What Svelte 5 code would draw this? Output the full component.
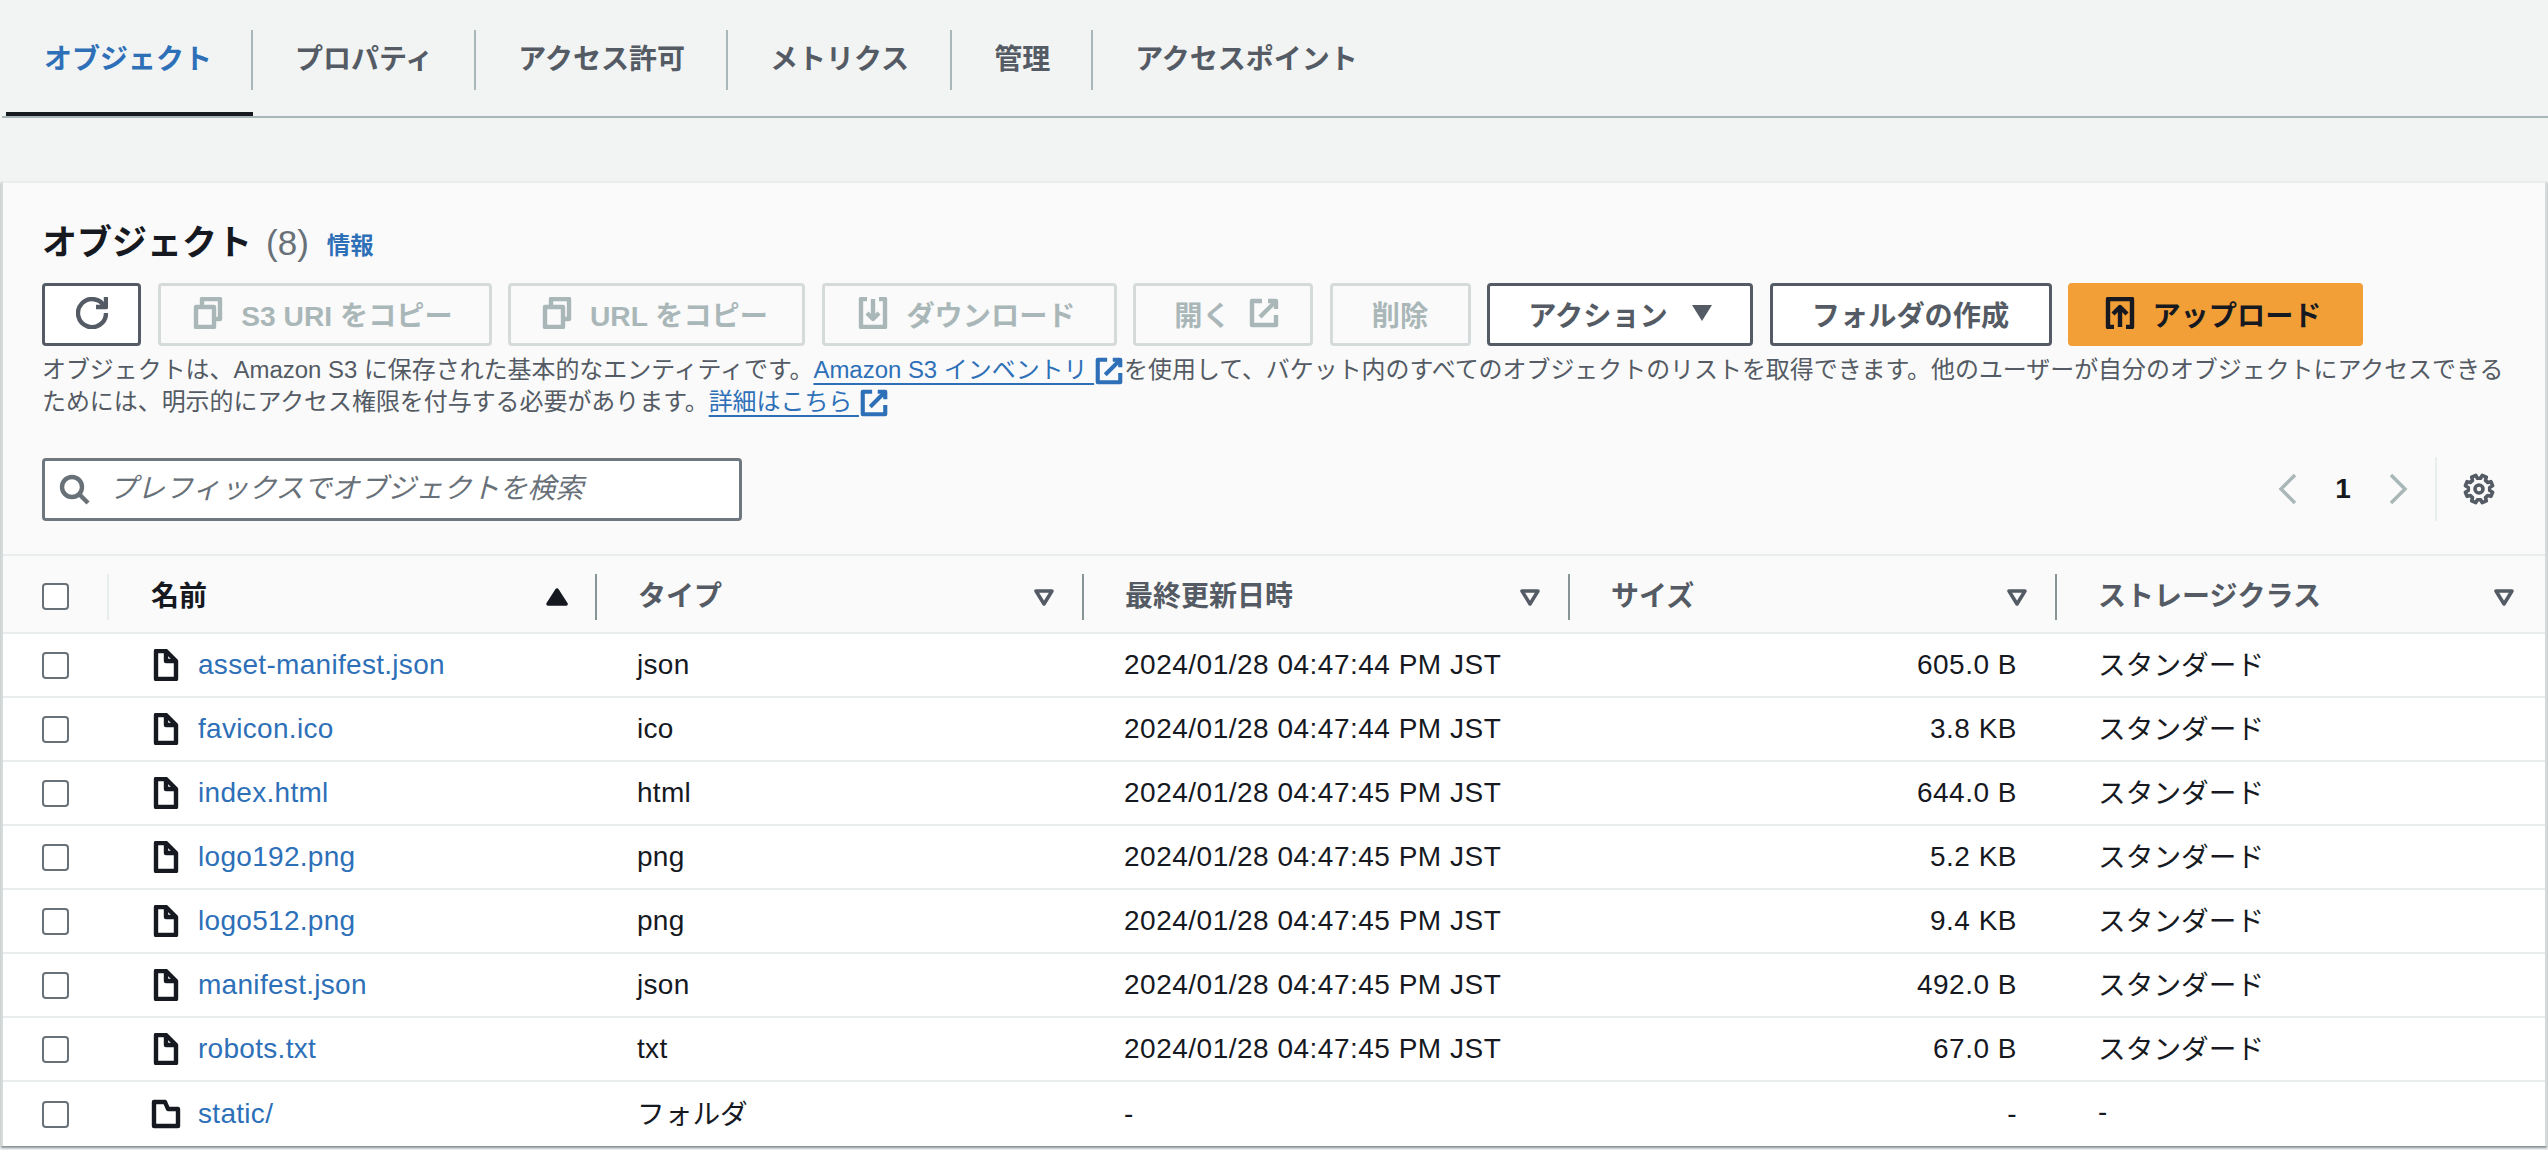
<script>
  const tabs = ["オブジェクト", "プロパティ", "アクセス許可", "メトリクス", "管理", "アクセスポイント"];

  const files = [
    { name: "asset-manifest.json", type: "json", date: "2024/01/28 04:47:44 PM JST", size: "605.0 B", cls: "スタンダード" },
    { name: "favicon.ico", type: "ico", date: "2024/01/28 04:47:44 PM JST", size: "3.8 KB", cls: "スタンダード" },
    { name: "index.html", type: "html", date: "2024/01/28 04:47:45 PM JST", size: "644.0 B", cls: "スタンダード" },
    { name: "logo192.png", type: "png", date: "2024/01/28 04:47:45 PM JST", size: "5.2 KB", cls: "スタンダード" },
    { name: "logo512.png", type: "png", date: "2024/01/28 04:47:45 PM JST", size: "9.4 KB", cls: "スタンダード" },
    { name: "manifest.json", type: "json", date: "2024/01/28 04:47:45 PM JST", size: "492.0 B", cls: "スタンダード" },
    { name: "robots.txt", type: "txt", date: "2024/01/28 04:47:45 PM JST", size: "67.0 B", cls: "スタンダード" },
    { name: "static/", type: "フォルダ", date: "-", size: "-", cls: "-", folder: true }
  ];

  const columns = ["タイプ", "最終更新日時", "サイズ", "ストレージクラス"];

  // 8 toothed gear outline in a 16 box
  function gearPath() {
    const pts = [];
    for (let i = 0; i < 8; i++) {
      const a = (Math.PI / 4) * i + Math.PI / 8;
      const w = 0.2;
      pts.push([a - w * 1.25, 5.4], [a - w * 0.8, 7], [a + w * 0.8, 7], [a + w * 1.25, 5.4]);
    }
    return (
      pts
        .map(([a, r], i) => `${i ? "L" : "M"}${(8 + r * Math.cos(a)).toFixed(2)} ${(8 + r * Math.sin(a)).toFixed(2)}`)
        .join("") + "Z"
    );
  }
</script>

{#snippet external()}
  <svg class="ext" viewBox="0 0 16 16"><path d="M10 2h4v4" /><path d="m6 10 8-8" /><path d="M14 9.05V14H2V2h5" /></svg>
{/snippet}

{#snippet copy()}
  <svg class="ico" viewBox="0 0 16 16"><path d="M2 5h9v10H2z" /><path d="M5 5V1h9v10h-3" /></svg>
{/snippet}

<div class="page">
  <nav class="tabs">
    {#each tabs as tab, i}
      <div class="tab" class:active={i === 0}>
        <span class:last={i === tabs.length - 1}>{tab}</span>
      </div>
    {/each}
  </nav>

  <section class="panel">
    <div class="toolbar">
      <div class="title">
        <h2>オブジェクト</h2>
        <span class="count">(8)</span>
        <a class="info" href="#info">情報</a>
      </div>

      <div class="actions">
        <button class="btn refresh" aria-label="更新">
          <svg class="ico" viewBox="0 0 16 16"><path d="M10 5h5V0" /><path d="M15 8a7 7 0 1 1-.7-3" /></svg>
        </button>
        <button class="btn off w-s3">{@render copy()}S3 URI をコピー</button>
        <button class="btn off w-url">{@render copy()}URL をコピー</button>
        <button class="btn off w-dl">
          <svg class="ico" viewBox="0 0 16 16"><path d="M5 1H2v14h12V1h-3" /><path d="M8 1v10" /><path d="m5 8 3 3 3-3" /></svg>
          ダウンロード
        </button>
        <button class="btn off w-open">開く{@render external()}</button>
        <button class="btn off w-del">削除</button>
        <button class="btn w-act">
          アクション
          <svg class="caret" viewBox="0 0 20 16"><path d="M0 0h20L10 16z" /></svg>
        </button>
        <button class="btn w-folder">フォルダの作成</button>
        <button class="btn primary w-up">
          <svg class="ico" viewBox="0 0 16 16"><path d="M5 15H2V1h12v14h-3" /><path d="M8 15V5" /><path d="m4.500 8.500 3.500-3.500 3.500 3.500" /></svg>
          アップロード
        </button>
      </div>

      <p class="desc">
        オブジェクトは、Amazon S3 に保存された基本的なエンティティです。<a href="#inv">Amazon S3 インベントリ&nbsp;</a>{@render external()}を使用して、バケット内のすべてのオブジェクトのリストを取得できます。他のユーザーが自分のオブジェクトにアクセスできるためには、明示的にアクセス権限を付与する必要があります。<a href="#more">詳細はこちら&nbsp;</a>{@render external()}
      </p>

      <div class="filter">
        <label class="search">
          <svg class="ico" viewBox="0 0 16 16"><circle cx="7" cy="7" r="5" /><path d="m15 15-4.5-4.5" /></svg>
          <input type="text" placeholder="プレフィックスでオブジェクトを検索" />
        </label>
        <div class="pager">
          <svg class="chev" viewBox="0 0 32 32"><path d="M23 2 9 16l14 14" /></svg>
          <span class="num">1</span>
          <svg class="chev" viewBox="0 0 32 32"><path d="m9 2 14 14L9 30" /></svg>
          <i class="vsep"></i>
          <svg class="ico gear" viewBox="0 0 16 16"><path d={gearPath()} /><circle cx="8" cy="8" r="2" /></svg>
        </div>
      </div>
    </div>

    <div class="table">
      <div class="row head">
        <div class="hcell first"><span class="box"></span></div>
        <div class="hcell sorted">
          <span>名前</span>
          <svg class="sort" viewBox="0 0 22 18"><path d="M11 2 20 16H2z" fill="currentColor" /></svg>
        </div>
        {#each columns as col}
          <div class="hcell">
            <span>{col}</span>
            <svg class="sort" viewBox="0 0 22 18"><path d="M3 3h16l-8 13z" /></svg>
          </div>
        {/each}
      </div>

      {#each files as f}
        <div class="row">
          <div class="cell"><span class="box"></span></div>
          <div class="cell name">
            {#if f.folder}
              <svg class="ico" viewBox="0 0 16 16"><path d="M2 2v12h12V5.500H9L7.500 2z" /></svg>
            {:else}
              <svg class="ico" viewBox="0 0 16 16"><path d="M3 1h5l5 5v9H3z" /><path d="M8 1v5h5" /></svg>
            {/if}
            <a href="#file">{f.name}</a>
          </div>
          <div class="cell" class:kana={f.folder}>{f.type}</div>
          <div class="cell date">{f.date}</div>
          <div class="cell size">{f.size}</div>
          <div class="cell kana">{f.cls}</div>
        </div>
      {/each}
    </div>
  </section>
</div>

<style>
  :global(body) {
    margin: 0;
    background: #f2f3f3;
  }
  .page {
    width: 2548px;
    height: 1150px;
    overflow: hidden;
    background: #f2f3f3;
    font-family: "Liberation Sans", "Noto Sans CJK JP", sans-serif;
    color: #16191f;
  }

  .tabs {
    display: flex;
    height: 116px;
    margin-left: 2px;
    padding-left: 4px;
    border-bottom: 2px solid #aab7b8;
  }
  .tab {
    height: 116px;
    padding-top: 30px;
    box-sizing: border-box;
    font-size: 28px;
    font-weight: 700;
    color: #545b64;
  }
  .tab span {
    display: flex;
    align-items: center;
    height: 60px;
    padding: 0 41px 6px 42px;
    box-sizing: border-box;
    border-right: 2px solid #aab7b8;
  }
  .tab:first-child span {
    padding-left: 38px;
    padding-right: 39px;
  }
  .tab span.last {
    border-right: none;
  }
  .tab.active {
    color: #2e70b8;
    border-bottom: 4px solid #16191f;
  }

  .panel {
    margin: 63px 1px 0;
    background: #fafafa;
    border: 2px solid #d5dbdb;
    border-top-color: #eaeded;
    border-bottom: none;
    box-shadow: 0 2px 2px rgba(0, 28, 36, 0.45);
  }
  .toolbar {
    padding: 40px 50px 33px 39px;
  }

  .title {
    display: flex;
    align-items: center;
    height: 40px;
    line-height: 40px;
    padding-bottom: 2px;
    margin-bottom: -2px;
  }
  .title h2 {
    margin: 0;
    font-size: 35px;
    font-weight: 700;
  }
  .count {
    margin-left: 14px;
    font-size: 35px;
    color: #687078;
  }
  .info {
    margin-left: 18px;
    margin-top: 6px;
    font-size: 23.4px;
    font-weight: 700;
    color: #2e70b8;
    text-decoration: none;
  }

  .actions {
    display: flex;
    gap: 16.500px;
    margin-top: 20px;
  }
  .btn {
    display: flex;
    align-items: center;
    justify-content: center;
    gap: 17px;
    height: 63px;
    padding: 0 0 3px;
    box-sizing: border-box;
    background: #fff;
    border: 3px solid #545b64;
    border-radius: 4px;
    font: inherit;
    font-size: 28.2px;
    font-weight: 700;
    color: #545b64;
  }
  .btn.off {
    background: #fafafa;
    border-color: #d5dbdb;
    color: #aab7b8;
  }
  .btn.primary {
    background: #f29f38;
    border-color: #f29f38;
    color: #16191f;
  }
  .refresh { width: 99px; }
  .w-s3 { width: 334px; padding-right: 4px; }
  .w-url { width: 297px; padding-right: 4px; }
  .w-dl { width: 295px; padding-right: 5px; }
  .w-open { width: 180px; padding-left: 8px; gap: 17px; }
  .w-del { width: 141px; }
  .w-act { width: 266px; gap: 24px; }
  .w-folder { width: 282px; }
  .w-up { width: 295px; padding-right: 5px; gap: 16px; }

  .ico,
  .ext {
    flex: none;
    width: 32px;
    height: 32px;
    fill: none;
    stroke: currentColor;
    stroke-width: 2.2;
    stroke-linejoin: round;
  }
  .caret {
    width: 20px;
    height: 16px;
    fill: currentColor;
  }

  .desc {
    width: 2470px;
    margin: 8px 0 0;
    font-size: 23.95px;
    line-height: 32px;
    color: #545b64;
  }
  .desc a {
    color: #2e70b8;
    text-decoration: underline;
    text-decoration-thickness: 2px;
    text-underline-offset: 5px;
  }
  .desc .ext {
    width: 30px;
    height: 30px;
    margin: -4px 0 -4px 0;
    vertical-align: -4px;
    color: #2e70b8;
  }

  .filter {
    display: flex;
    align-items: center;
    justify-content: space-between;
    margin-top: 39px;
  }
  .search {
    display: flex;
    align-items: center;
    gap: 19px;
    width: 700px;
    height: 63px;
    padding-left: 13px;
    box-sizing: border-box;
    background: #fff;
    border: 3px solid #70787f;
    border-radius: 4px;
    color: #687078;
  }
  .search input {
    flex: 1;
    min-width: 0;
    padding: 0;
    border: none;
    outline: none;
    background: transparent;
    font: inherit;
    font-size: 28px;
    font-style: italic;
  }
  .search input::placeholder {
    color: #687078;
    opacity: 1;
  }

  .pager {
    display: flex;
    align-items: center;
    height: 64px;
  }
  .chev {
    width: 32px;
    height: 32px;
    fill: none;
    stroke: #aab7b8;
    stroke-width: 3.500;
  }
  .num {
    width: 16px;
    margin: 0 31px;
    font-size: 28px;
    font-weight: 700;
    text-align: center;
  }
  .vsep {
    width: 2px;
    height: 64px;
    margin: 0 26px 0 21px;
    background: #eaeded;
  }
  .gear {
    color: #545b64;
    stroke-width: 1.8;
  }

  .table {
    font-size: 28px;
    letter-spacing: 0.3px;
  }
  .row {
    display: grid;
    grid-template-columns: 106px 488px 487px 486px 487px 1fr;
    height: 64px;
    box-sizing: border-box;
    background: #fff;
    border-bottom: 2px solid #eaeded;
  }
  .row:last-child {
    border-bottom: none;
  }
  .row.head {
    height: 80px;
    padding: 18px 0 19px;
    background: #fafafa;
    border-top: 2px solid #eaeded;
    border-bottom: 2px solid #eaeded;
  }

  .hcell {
    display: flex;
    align-items: center;
    justify-content: space-between;
    padding: 0 27px 0 41px;
    box-sizing: border-box;
    border-right: 2px solid #879596;
    font-size: 28px;
    letter-spacing: 0;
    font-weight: 700;
    color: #545b64;
  }
  .hcell span:not(.box) {
    margin-bottom: 6px;
  }
  .hcell:last-child {
    border-right: none;
    padding-left: 41px;
    padding-right: 30px;
  }
  .hcell.first {
    padding: 0 0 0 39px;
    border-right-color: #eaeded;
  }
  .hcell.first .box {
    margin-bottom: 2px;
  }
  .hcell.sorted {
    padding-left: 42px;
    color: #16191f;
  }
  .sort {
    flex: none;
    width: 22px;
    height: 18px;
    fill: none;
    stroke: currentColor;
    stroke-width: 3.500;
    stroke-linejoin: round;
  }

  .cell {
    display: flex;
    align-items: center;
    padding-left: 40px;
  }
  .cell:first-child {
    padding-left: 39px;
  }
  .cell:last-child {
    padding-left: 41px;
  }
  .cell.kana {
    padding-bottom: 4px;
    box-sizing: border-box;
    font-size: 27.7px;
    letter-spacing: 0;
  }
  .cell.date,
  .cell.size {
    letter-spacing: 0.5px;
  }
  .cell.name {
    gap: 16px;
    padding-left: 41px;
    color: #16191f;
  }
  .cell.name a {
    color: #2e70b8;
    text-decoration: none;
  }
  .cell.size {
    justify-content: flex-end;
    padding: 0 40px 0 0;
  }
  .box {
    width: 27px;
    height: 27px;
    box-sizing: border-box;
    background: #fff;
    border: 2px solid #687078;
    border-radius: 4px;
  }
</style>
